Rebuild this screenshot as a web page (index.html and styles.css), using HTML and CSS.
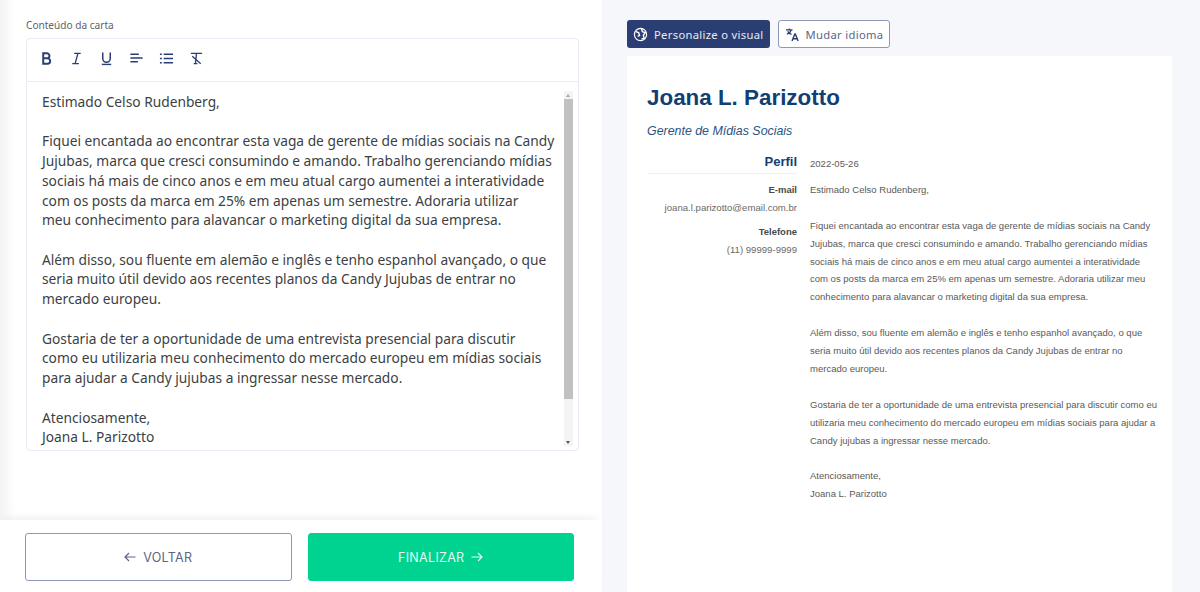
FILE: index.html
```html
<!DOCTYPE html>
<html lang="pt-BR">
<head>
<meta charset="utf-8">
<title>Conteúdo da carta</title>
<link rel="stylesheet" href="styles.css">
</head>
<body>
<main class="page">
  <section class="left">
    <div class="form">
      <label class="field-label">Conteúdo da carta</label>
      <div class="editor">
        <div class="toolbar">
          <svg class="tool" viewBox="0 0 16 16"><path d="M4.500 2.500h4a2.600 2.600 0 0 1 0 5.300h-4zM4.500 7.800h4.600a2.850 2.850 0 0 1 0 5.700H4.500z" fill="none" stroke="#2b3e74" stroke-width="2.100"/></svg>
          <svg class="tool" viewBox="0 0 16 16"><path d="M5.500 2.500h7M3.500 13.500h7M9.500 2.500l-3 11" fill="none" stroke="#2b3e74" stroke-width="1.400"/></svg>
          <svg class="tool" viewBox="0 0 16 16"><path d="M4 1.500v6.500a4 4 0 0 0 8 0V1.500" fill="none" stroke="#2b3e74" stroke-width="1.600"/><path d="M3 14.300h10" stroke="#2b3e74" stroke-width="1.500"/></svg>
          <svg class="tool" viewBox="0 0 16 16"><path d="M1.500 3.500h9M1.500 7.500h13M1.500 11.500h8" fill="none" stroke="#2b3e74" stroke-width="1.500"/></svg>
          <svg class="tool" viewBox="0 0 16 16"><path d="M5 3.500h10M5 8h10M5 12.500h10" stroke="#2b3e74" stroke-width="1.500"/><path d="M1 3.500h2M1 8h2M1 12.500h2" stroke="#2b3e74" stroke-width="1.500"/></svg>
          <svg class="tool" viewBox="0 0 16 16"><path d="M2 2.500h12M8 2.500l-1.200 11M5 13.500h4M3.500 5.500l9 8" fill="none" stroke="#2b3e74" stroke-width="1.400"/></svg>
        </div>
        <div class="editor-body">
          <div class="editor-text">
            <p>Estimado Celso Rudenberg,</p>
            <p>Fiquei encantada ao encontrar esta vaga de gerente de mídias sociais na Candy<br>Jujubas, marca que cresci consumindo e amando. Trabalho gerenciando mídias<br>sociais há mais de cinco anos e em meu atual cargo aumentei a interatividade<br>com os posts da marca em 25% em apenas um semestre. Adoraria utilizar<br>meu conhecimento para alavancar o marketing digital da sua empresa.</p>
            <p>Além disso, sou fluente em alemão e inglês e tenho espanhol avançado, o que<br>seria muito útil devido aos recentes planos da Candy Jujubas de entrar no<br>mercado europeu.</p>
            <p>Gostaria de ter a oportunidade de uma entrevista presencial para discutir<br>como eu utilizaria meu conhecimento do mercado europeu em mídias sociais<br>para ajudar a Candy jujubas a ingressar nesse mercado.</p>
            <p>Atenciosamente,<br>Joana L. Parizotto</p>
          </div>
          <div class="scrollbar">
            <span class="arrow arrow-up"></span>
            <span class="thumb"></span>
            <span class="arrow arrow-down"></span>
          </div>
        </div>
      </div>
    </div>
    <div class="actions">
      <button class="btn btn-back">
        <svg class="btn-arrow" viewBox="0 0 12 10"><path d="M11.500 5H1M5 1 1 5l4 4" fill="none" stroke="#5c6585" stroke-width="1.200"/></svg>
        VOLTAR
      </button>
      <button class="btn btn-next">
        FINALIZAR
        <svg class="btn-arrow" viewBox="0 0 12 10"><path d="M.5 5H11M7 1l4 4-4 4" fill="none" stroke="#e4fbf3" stroke-width="1.200"/></svg>
      </button>
    </div>
  </section>
  <section class="right">
    <div class="top-buttons">
      <button class="chip chip-dark">
        <svg class="chip-icon" viewBox="0 0 16 16"><circle cx="8" cy="8" r="6.500" fill="none" stroke="#fff" stroke-width="1.300"/><path d="M3 5l3 1 1 3-2 1M9 2l1 3 3 1-2 3 1 3-3 1" fill="none" stroke="#fff" stroke-width="1.500"/></svg>
        Personalize o visual
      </button>
      <button class="chip chip-light">
        <svg class="chip-icon" viewBox="0 0 16 16"><path d="M1 3h7M4.500 1.500V3M2 7.500c2.500-.5 4-2 4.500-4.500M3 4.500c.5 1.500 2 2.800 4 3.300" fill="none" stroke="#2b3e74" stroke-width="1.300"/><path d="M7.500 15l3-7.500h.5l3 7.500M8.700 12.500h4.600" fill="none" stroke="#2b3e74" stroke-width="1.500"/></svg>
        Mudar idioma
      </button>
    </div>
    <article class="sheet">
      <h1 class="name">Joana L. Parizotto</h1>
      <p class="role">Gerente de Mídias Sociais</p>
      <div class="columns">
        <aside class="side">
          <h2 class="side-title">Perfil</h2>
          <h3 class="side-label">E-mail</h3>
          <p class="side-value">joana.l.parizotto@email.com.br</p>
          <h3 class="side-label">Telefone</h3>
          <p class="side-value">(11) 99999-9999</p>
        </aside>
        <div class="letter">
          <p class="date">2022-05-26</p>
          <p>Estimado Celso Rudenberg,</p>
          <p>Fiquei encantada ao encontrar esta vaga de gerente de mídias sociais na Candy<br>Jujubas, marca que cresci consumindo e amando. Trabalho gerenciando mídias<br>sociais há mais de cinco anos e em meu atual cargo aumentei a interatividade<br>com os posts da marca em 25% em apenas um semestre. Adoraria utilizar meu<br>conhecimento para alavancar o marketing digital da sua empresa.</p>
          <p>Além disso, sou fluente em alemão e inglês e tenho espanhol avançado, o que<br>seria muito útil devido aos recentes planos da Candy Jujubas de entrar no<br>mercado europeu.</p>
          <p>Gostaria de ter a oportunidade de uma entrevista presencial para discutir como eu<br>utilizaria meu conhecimento do mercado europeu em mídias sociais para ajudar a<br>Candy jujubas a ingressar nesse mercado.</p>
          <p>Atenciosamente,<br>Joana L. Parizotto</p>
        </div>
      </div>
    </article>
  </section>
</main>
</body>
</html>
```
FILE: styles.css
```css
* { box-sizing: border-box; }
html, body { margin: 0; height: 100%; }
body { overflow: hidden; background: #f6f7fb; font-family: "Noto Sans", sans-serif; }
p, h1, h2, h3 { margin: 0; }

.page { display: flex; width: 1200px; height: 592px; }

.left {
  width: 602px;
  flex: none;
  display: flex;
  flex-direction: column;
  background: linear-gradient(90deg, #f3f3f3 0, #fff 15px);
}
.form { flex: 1; padding: 19px 23px 0 26px; }
.field-label { display: block; height: 19px; font-size: 10.100px; line-height: 13px; color: #5d6269; }
.editor {
  height: 413px;
  border: 1px solid #e9ebf5;
  border-radius: 4px;
  background: #fff;
}
.toolbar {
  height: 43px;
  margin: 0 0 0 -1px;
  padding: 0 9px 3px 13px;
  display: flex;
  align-items: center;
  gap: 15px;
  border-bottom: 1px solid #e9ebf5;
}
.tool { width: 15px; height: 15px; flex: none; }
.editor-body { display: flex; height: 368px; }
.editor-text {
  flex: 1;
  min-width: 0;
  padding: 10px 0 0 15px;
  font-size: 13.750px;
  line-height: 19.720px;
  color: #3c3f44;
  overflow: hidden;
  white-space: nowrap;
}
.editor-text p { margin-bottom: 19.720px; }
.scrollbar {
  width: 9px;
  flex: none;
  margin: 9px 5px 4px 0;
  display: flex;
  flex-direction: column;
  background: #f4f4f4;
}
.arrow { height: 8px; flex: none; position: relative; }
.arrow-down { margin-top: auto; }
.arrow-up::after, .arrow-down::after {
  content: "";
  position: absolute;
  left: 2px;
  top: 3px;
  border-left: 2.500px solid transparent;
  border-right: 2.500px solid transparent;
}
.arrow-up::after { border-bottom: 3px solid #a5a5a5; }
.arrow-down::after { border-top: 3px solid #555; }
.thumb { height: 300px; flex: none; background: #c1c1c1; }

.actions {
  height: 72px;
  flex: none;
  padding: 13px 28px 11px 25px;
  display: flex;
  gap: 16px;
  background: #fff;
  box-shadow: 0 -6px 10px -6px rgba(0, 0, 0, .1);
}
.btn {
  flex: 1 1 0;
  min-width: 0;
  display: flex;
  align-items: center;
  justify-content: center;
  gap: 7px;
  border-radius: 3px;
  font-family: Inter, sans-serif;
  font-size: 12.500px;
  letter-spacing: .3px;
}
.btn-arrow { width: 12px; height: 10px; flex: none; }
.btn-back { background: #fff; border: 1px solid #8f97b8; color: #5c6585; }
.btn-next { background: #00d38f; border: 1px solid #00d38f; color: #e4fbf3; }

.right { flex: 1; min-width: 0; padding: 20px 28px 0 25px; display: flex; flex-direction: column; }
.top-buttons { display: flex; gap: 8px; height: 28px; }
.chip {
  display: flex;
  align-items: center;
  gap: 6px;
  height: 28px;
  padding: 0 6px;
  border-radius: 3px;
  font-family: "Noto Sans", sans-serif;
  font-size: 11.200px;
  letter-spacing: .33px;
}
.chip-icon { width: 15px; height: 15px; flex: none; }
.chip-dark { background: #2b3e74; color: #e8eaf2; border: 0; }
.chip-light { background: #fff; border: 1px solid #8f97b8; color: #5c6585; }
.sheet {
  flex: 1;
  margin-top: 8px;
  background: #fff;
  padding: 27px 20px 0 20px;
  font-family: "Liberation Sans", sans-serif;
}
.name { font-size: 22.400px; line-height: 30px; font-weight: 700; color: #123f73; }
.role { margin-top: 10px; font-size: 12.400px; line-height: 16px; font-style: italic; color: #2a5580; }
.columns { display: flex; gap: 13px; margin-top: 13px; }
.side { width: 150px; flex: none; text-align: right; }
.side-title {
  font-size: 13px;
  line-height: 19px;
  font-weight: 700;
  color: #123f73;
  padding-bottom: 2px;
  border-bottom: 1px solid #f0f0f0;
  margin-bottom: 7px;
}
.side-label { font-size: 9.500px; line-height: 18px; font-weight: 700; color: #4a4a4a; }
.side-value { font-size: 9.600px; line-height: 18px; color: #6a6a6a; margin-bottom: 6px; }
.letter { flex: 1; min-width: 0; font-size: 9.520px; line-height: 17.900px; color: #5a5a5a; white-space: nowrap; padding-top: 3px; }
.letter p { margin-bottom: 17.900px; }
.letter .date { margin-bottom: 8px; }
```
